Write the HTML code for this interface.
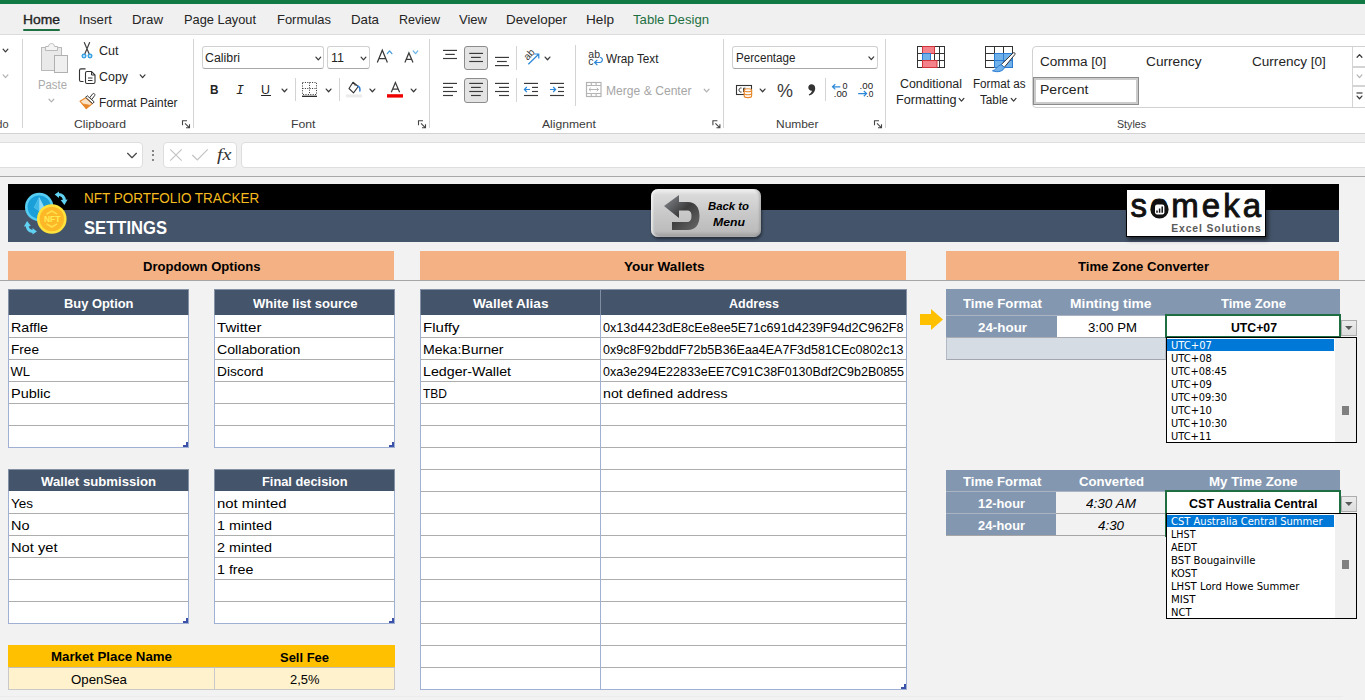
<!DOCTYPE html>
<html lang="en"><head><meta charset="utf-8"><title>NFT Portfolio Tracker - Settings</title>
<style>
html,body{margin:0;padding:0;}
body{width:1365px;height:700px;overflow:hidden;background:#f0f0f0;font-family:'Liberation Sans',sans-serif;}
#app{position:relative;width:1365px;height:700px;overflow:hidden;background:#f0f0f0;}
svg{position:absolute;overflow:visible;}
.lg{-webkit-text-stroke:0.9px #111;}
</style></head>
<body>
<div id="app">
<div style="position:absolute;left:0px;top:0px;width:1365px;height:4px;background:#127a45;"></div>
<div style="position:absolute;left:0px;top:4px;width:1365px;height:30px;background:#f0f0f0;"></div>
<span id="t0" style="position:absolute;white-space:pre;left:22.5px;top:11.5px;font-family:'Liberation Sans',sans-serif;font-size:13px;line-height:16px;color:#242424;-webkit-text-stroke:0.35px #242424;transform:scaleX(1.0667);transform-origin:0 50%;">Home</span>
<span id="t1" style="position:absolute;white-space:pre;left:78.5px;top:11.5px;font-family:'Liberation Sans',sans-serif;font-size:13px;line-height:16px;color:#242424;transform:scaleX(1.0149);transform-origin:0 50%;">Insert</span>
<span id="t2" style="position:absolute;white-space:pre;left:131.5px;top:11.5px;font-family:'Liberation Sans',sans-serif;font-size:13px;line-height:16px;color:#242424;transform:scaleX(1.0216);transform-origin:0 50%;">Draw</span>
<span id="t3" style="position:absolute;white-space:pre;left:183.5px;top:11.5px;font-family:'Liberation Sans',sans-serif;font-size:13px;line-height:16px;color:#242424;transform:scaleX(0.9861);transform-origin:0 50%;">Page Layout</span>
<span id="t4" style="position:absolute;white-space:pre;left:276.5px;top:11.5px;font-family:'Liberation Sans',sans-serif;font-size:13px;line-height:16px;color:#242424;transform:scaleX(0.9965);transform-origin:0 50%;">Formulas</span>
<span id="t5" style="position:absolute;white-space:pre;left:350.5px;top:11.5px;font-family:'Liberation Sans',sans-serif;font-size:13px;line-height:16px;color:#242424;transform:scaleX(1.0193);transform-origin:0 50%;">Data</span>
<span id="t6" style="position:absolute;white-space:pre;left:398.5px;top:11.5px;font-family:'Liberation Sans',sans-serif;font-size:13px;line-height:16px;color:#242424;transform:scaleX(0.9619);transform-origin:0 50%;">Review</span>
<span id="t7" style="position:absolute;white-space:pre;left:458.5px;top:11.5px;font-family:'Liberation Sans',sans-serif;font-size:13px;line-height:16px;color:#242424;transform:scaleX(1.0017);transform-origin:0 50%;">View</span>
<span id="t8" style="position:absolute;white-space:pre;left:505.5px;top:11.5px;font-family:'Liberation Sans',sans-serif;font-size:13px;line-height:16px;color:#242424;transform:scaleX(1.0293);transform-origin:0 50%;">Developer</span>
<span id="t9" style="position:absolute;white-space:pre;left:585.5px;top:11.5px;font-family:'Liberation Sans',sans-serif;font-size:13px;line-height:16px;color:#242424;transform:scaleX(1.0467);transform-origin:0 50%;">Help</span>
<span id="t10" style="position:absolute;white-space:pre;left:632.5px;top:11.5px;font-family:'Liberation Sans',sans-serif;font-size:13px;line-height:16px;color:#1e6f42;transform:scaleX(1.0112);transform-origin:0 50%;">Table Design</span>
<div style="position:absolute;left:22.5px;top:28.7px;width:37.5px;height:2.2px;background:#1e6f42;border-radius:1px;"></div>
<div style="position:absolute;left:0px;top:34px;width:1365px;height:100px;background:#fff;border-top:1px solid #dcdcdc;border-bottom:1px solid #d2d2d2;box-sizing:border-box;"></div>
<div style="position:absolute;left:22px;top:39px;width:1px;height:89px;background:#d4d4d4;"></div>
<div style="position:absolute;left:193px;top:39px;width:1px;height:89px;background:#d4d4d4;"></div>
<div style="position:absolute;left:429px;top:39px;width:1px;height:89px;background:#d4d4d4;"></div>
<div style="position:absolute;left:723px;top:39px;width:1px;height:89px;background:#d4d4d4;"></div>
<div style="position:absolute;left:885px;top:39px;width:1px;height:89px;background:#d4d4d4;"></div>
<span style="position:absolute;right:1356.5px;top:117.8px;font-size:11px;line-height:13px;color:#3b3b3b;white-space:pre;">Undo</span>
<span id="t11" style="position:absolute;white-space:pre;left:73.5px;top:118.0px;font-family:'Liberation Sans',sans-serif;font-size:11px;line-height:13px;color:#3b3b3b;transform:scaleX(1.1042);transform-origin:0 50%;">Clipboard</span>
<span id="t12" style="position:absolute;white-space:pre;left:291.0px;top:118.0px;font-family:'Liberation Sans',sans-serif;font-size:11px;line-height:13px;color:#3b3b3b;transform:scaleX(1.1128);transform-origin:0 50%;">Font</span>
<span id="t13" style="position:absolute;white-space:pre;left:541.5px;top:118.0px;font-family:'Liberation Sans',sans-serif;font-size:11px;line-height:13px;color:#3b3b3b;transform:scaleX(1.1038);transform-origin:0 50%;">Alignment</span>
<span id="t14" style="position:absolute;white-space:pre;left:775.5px;top:118.0px;font-family:'Liberation Sans',sans-serif;font-size:11px;line-height:13px;color:#3b3b3b;transform:scaleX(1.0863);transform-origin:0 50%;">Number</span>
<span id="t15" style="position:absolute;white-space:pre;left:1117.0px;top:118.0px;font-family:'Liberation Sans',sans-serif;font-size:11px;line-height:13px;color:#3b3b3b;transform:scaleX(0.9677);transform-origin:0 50%;">Styles</span>
<span id="t16" style="position:absolute;white-space:pre;left:37.5px;top:78.4px;font-family:'Liberation Sans',sans-serif;font-size:12px;line-height:14px;color:#ababab;transform:scaleX(0.9450);transform-origin:0 50%;">Paste</span>
<span id="t17" style="position:absolute;white-space:pre;left:99.0px;top:43.8px;font-family:'Liberation Sans',sans-serif;font-size:12px;line-height:14px;color:#242424;transform:scaleX(1.0435);transform-origin:0 50%;">Cut</span>
<span id="t18" style="position:absolute;white-space:pre;left:99.0px;top:69.8px;font-family:'Liberation Sans',sans-serif;font-size:12px;line-height:14px;color:#242424;transform:scaleX(1.0351);transform-origin:0 50%;">Copy</span>
<span id="t19" style="position:absolute;white-space:pre;left:99.0px;top:95.8px;font-family:'Liberation Sans',sans-serif;font-size:12px;line-height:14px;color:#242424;transform:scaleX(0.9892);transform-origin:0 50%;">Format Painter</span>
<div style="position:absolute;left:202px;top:46px;width:122px;height:23px;background:#fff;border:1px solid #d1d1d1;border-bottom-color:#a8a8a8;border-radius:3px;box-sizing:border-box;"></div>
<div style="position:absolute;left:327px;top:46px;width:43px;height:23px;background:#fff;border:1px solid #d1d1d1;border-bottom-color:#a8a8a8;border-radius:3px;box-sizing:border-box;"></div>
<span id="t20" style="position:absolute;white-space:pre;left:205.0px;top:51.3px;font-family:'Liberation Sans',sans-serif;font-size:12px;line-height:14px;color:#242424;transform:scaleX(1.0289);transform-origin:0 50%;">Calibri</span>
<span id="t21" style="position:absolute;white-space:pre;left:330.5px;top:51.3px;font-family:'Liberation Sans',sans-serif;font-size:12px;line-height:14px;color:#242424;transform:scaleX(1.0426);transform-origin:0 50%;">11</span>
<span id="t22" style="position:absolute;white-space:pre;left:210.0px;top:81.9px;font-family:'Liberation Sans',sans-serif;font-size:13.5px;line-height:16px;color:#242424;font-weight:bold;transform:scaleX(0.8718);transform-origin:0 50%;">B</span>
<span id="t23" style="position:absolute;white-space:pre;left:236.0px;top:82.8px;font-family:'Liberation Mono',monospace;font-size:13.5px;line-height:16px;color:#242424;font-style:italic;transform:scaleX(0.9865);transform-origin:0 50%;">I</span>
<span id="t24" style="position:absolute;white-space:pre;left:261.0px;top:81.5px;font-family:'Liberation Sans',sans-serif;font-size:13px;line-height:16px;color:#242424;transform:scaleX(0.9584);transform-origin:0 50%;">U</span>
<div style="position:absolute;left:261px;top:95px;width:9.5px;height:1.1px;background:#242424;"></div>
<div style="position:absolute;left:295px;top:78px;width:1px;height:23px;background:#d4d4d4;"></div>
<div style="position:absolute;left:339px;top:78px;width:1px;height:23px;background:#d4d4d4;"></div>
<div style="position:absolute;left:463.5px;top:45.5px;width:24.5px;height:24.5px;background:#e4e4e4;border:1px solid #8c8c8c;border-radius:3px;box-sizing:border-box;"></div>
<div style="position:absolute;left:463.5px;top:78px;width:24.5px;height:24.5px;background:#e4e4e4;border:1px solid #8c8c8c;border-radius:3px;box-sizing:border-box;"></div>
<div style="position:absolute;left:516px;top:46px;width:1px;height:24px;background:#d4d4d4;"></div>
<div style="position:absolute;left:516px;top:78px;width:1px;height:24px;background:#d4d4d4;"></div>
<div style="position:absolute;left:575px;top:45px;width:1px;height:61px;background:#d4d4d4;"></div>
<span id="t25" style="position:absolute;white-space:pre;left:606.0px;top:52.2px;font-family:'Liberation Sans',sans-serif;font-size:12px;line-height:14px;color:#242424;transform:scaleX(0.9799);transform-origin:0 50%;">Wrap Text</span>
<span id="t26" style="position:absolute;white-space:pre;left:606.0px;top:83.8px;font-family:'Liberation Sans',sans-serif;font-size:12px;line-height:14px;color:#a6a6a6;transform:scaleX(1.0094);transform-origin:0 50%;">Merge &amp; Center</span>
<div style="position:absolute;left:732px;top:46px;width:146px;height:23px;background:#fff;border:1px solid #d1d1d1;border-bottom-color:#a8a8a8;border-radius:3px;box-sizing:border-box;"></div>
<span id="t27" style="position:absolute;white-space:pre;left:735.5px;top:51.3px;font-family:'Liberation Sans',sans-serif;font-size:12px;line-height:14px;color:#242424;transform:scaleX(0.9692);transform-origin:0 50%;">Percentage</span>
<span id="t28" style="position:absolute;white-space:pre;left:777.0px;top:78.9px;font-family:'Liberation Sans',sans-serif;font-size:19px;line-height:23px;color:#3a3a3a;transform:scaleX(0.9464);transform-origin:0 50%;">%</span>
<div style="position:absolute;left:825px;top:78px;width:1px;height:23px;background:#d4d4d4;"></div>
<span id="t29" style="position:absolute;white-space:pre;left:900.0px;top:77.3px;font-family:'Liberation Sans',sans-serif;font-size:12px;line-height:14px;color:#242424;transform:scaleX(1.0325);transform-origin:0 50%;">Conditional</span>
<span id="t30" style="position:absolute;white-space:pre;left:895.5px;top:93.3px;font-family:'Liberation Sans',sans-serif;font-size:12px;line-height:14px;color:#242424;transform:scaleX(1.0548);transform-origin:0 50%;">Formatting</span>
<span id="t31" style="position:absolute;white-space:pre;left:973.0px;top:77.3px;font-family:'Liberation Sans',sans-serif;font-size:12px;line-height:14px;color:#242424;transform:scaleX(0.9719);transform-origin:0 50%;">Format as</span>
<span id="t32" style="position:absolute;white-space:pre;left:980.0px;top:93.3px;font-family:'Liberation Sans',sans-serif;font-size:12px;line-height:14px;color:#242424;transform:scaleX(0.9760);transform-origin:0 50%;">Table</span>
<div style="position:absolute;left:1031.5px;top:46px;width:340px;height:62px;background:#fff;border:1px solid #d1d1d1;border-radius:4px;box-sizing:border-box;"></div>
<div style="position:absolute;left:1352px;top:47px;width:1px;height:60px;background:#d4d4d4;"></div>
<div style="position:absolute;left:1353px;top:66px;width:12px;height:1.5px;background:#d4d4d4;"></div>
<div style="position:absolute;left:1353px;top:85.2px;width:12px;height:1.5px;background:#d4d4d4;"></div>
<span id="t33" style="position:absolute;white-space:pre;left:1039.9px;top:55.2px;font-family:'Liberation Sans',sans-serif;font-size:12.5px;line-height:15px;color:#242424;transform:scaleX(1.0860);transform-origin:0 50%;">Comma [0]</span>
<span id="t34" style="position:absolute;white-space:pre;left:1145.5px;top:55.2px;font-family:'Liberation Sans',sans-serif;font-size:12.5px;line-height:15px;color:#242424;transform:scaleX(1.0943);transform-origin:0 50%;">Currency</span>
<span id="t35" style="position:absolute;white-space:pre;left:1252.1px;top:55.2px;font-family:'Liberation Sans',sans-serif;font-size:12.5px;line-height:15px;color:#242424;transform:scaleX(1.0853);transform-origin:0 50%;">Currency [0]</span>
<div style="position:absolute;left:1033.4px;top:77.2px;width:105.3px;height:27.4px;background:#fff;border:1px solid #8c8c8c;box-sizing:border-box;box-shadow:inset 0 0 0 2px #cbcbcb;"></div>
<span id="t36" style="position:absolute;white-space:pre;left:1039.9px;top:83.0px;font-family:'Liberation Sans',sans-serif;font-size:12.5px;line-height:15px;color:#242424;transform:scaleX(1.1231);transform-origin:0 50%;">Percent</span>
<div style="position:absolute;left:0px;top:134px;width:1365px;height:42px;background:#f0f0f0;"></div>
<div style="position:absolute;left:-5px;top:142px;width:148px;height:26px;background:#fff;border:1px solid #dedede;border-radius:4px;box-sizing:border-box;"></div>
<div style="position:absolute;left:163px;top:142px;width:74px;height:26px;background:#fff;border:1px solid #dedede;border-radius:4px;box-sizing:border-box;"></div>
<div style="position:absolute;left:241px;top:142px;width:1130px;height:26px;background:#fff;border:1px solid #dedede;border-radius:4px;box-sizing:border-box;"></div>
<span id="t37" style="position:absolute;white-space:pre;left:217.0px;top:144.8px;font-family:'Liberation Serif',serif;font-size:16px;line-height:19px;color:#333;font-style:italic;transform:scaleX(1.2500);transform-origin:0 50%;">fx</span>
<div style="position:absolute;left:151.8px;top:149.8px;width:2px;height:2px;background:#858585;"></div>
<div style="position:absolute;left:151.8px;top:154.2px;width:2px;height:2px;background:#858585;"></div>
<div style="position:absolute;left:151.8px;top:158.6px;width:2px;height:2px;background:#858585;"></div>
<svg style="left:0px;top:36px" width="1365" height="134" viewBox="0 36 1365 134"><path d="M3.1 49.15L5.5 51.85L7.9 49.15" fill="none" stroke="#3a3a3a" stroke-width="1.25" stroke-linecap="round" stroke-linejoin="round"/><path d="M140.2 74.85000000000001L142.6 77.55L145.0 74.85000000000001" fill="none" stroke="#3a3a3a" stroke-width="1.25" stroke-linecap="round" stroke-linejoin="round"/><path d="M315.90000000000003 57.15L318.3 59.85L320.7 57.15" fill="none" stroke="#3a3a3a" stroke-width="1.25" stroke-linecap="round" stroke-linejoin="round"/><path d="M361.1 57.15L363.5 59.85L365.9 57.15" fill="none" stroke="#3a3a3a" stroke-width="1.25" stroke-linecap="round" stroke-linejoin="round"/><path d="M282.1 89.05000000000001L284.5 91.75L286.9 89.05000000000001" fill="none" stroke="#3a3a3a" stroke-width="1.25" stroke-linecap="round" stroke-linejoin="round"/><path d="M326.20000000000005 89.05000000000001L328.6 91.75L331.0 89.05000000000001" fill="none" stroke="#3a3a3a" stroke-width="1.25" stroke-linecap="round" stroke-linejoin="round"/><path d="M370.0 89.05000000000001L372.4 91.75L374.79999999999995 89.05000000000001" fill="none" stroke="#3a3a3a" stroke-width="1.25" stroke-linecap="round" stroke-linejoin="round"/><path d="M411.20000000000005 89.05000000000001L413.6 91.75L416.0 89.05000000000001" fill="none" stroke="#3a3a3a" stroke-width="1.25" stroke-linecap="round" stroke-linejoin="round"/><path d="M545.1 57.05L547.5 59.75L549.9 57.05" fill="none" stroke="#3a3a3a" stroke-width="1.25" stroke-linecap="round" stroke-linejoin="round"/><path d="M868.9 56.949999999999996L871.3 59.65L873.6999999999999 56.949999999999996" fill="none" stroke="#3a3a3a" stroke-width="1.25" stroke-linecap="round" stroke-linejoin="round"/><path d="M760.2 89.05000000000001L762.6 91.75L765.0 89.05000000000001" fill="none" stroke="#3a3a3a" stroke-width="1.25" stroke-linecap="round" stroke-linejoin="round"/><path d="M959.1 98.35000000000001L961.5 101.05L963.9 98.35000000000001" fill="none" stroke="#3a3a3a" stroke-width="1.25" stroke-linecap="round" stroke-linejoin="round"/><path d="M1011.2 98.35000000000001L1013.6 101.05L1016.0 98.35000000000001" fill="none" stroke="#3a3a3a" stroke-width="1.25" stroke-linecap="round" stroke-linejoin="round"/><path d="M3.1 74.85000000000001L5.5 77.55L7.9 74.85000000000001" fill="none" stroke="#b4b4b4" stroke-width="1.25" stroke-linecap="round" stroke-linejoin="round"/><path d="M49.0 99.25L51.4 101.94999999999999L53.8 99.25" fill="none" stroke="#b4b4b4" stroke-width="1.25" stroke-linecap="round" stroke-linejoin="round"/><path d="M704.2 89.25L706.6 91.94999999999999L709.0 89.25" fill="none" stroke="#b4b4b4" stroke-width="1.25" stroke-linecap="round" stroke-linejoin="round"/><path d="M1357.1 74.85000000000001L1359.5 77.55L1361.9 74.85000000000001" fill="none" stroke="#b4b4b4" stroke-width="1.25" stroke-linecap="round" stroke-linejoin="round"/><path d="M1357.1 57.25L1359.5 54.55L1361.9 57.25" fill="none" stroke="#3a3a3a" stroke-width="1.25" stroke-linecap="round" stroke-linejoin="round"/><path d="M1357.1 96.05000000000001L1359.5 98.75L1361.9 96.05000000000001" fill="none" stroke="#3a3a3a" stroke-width="1.25" stroke-linecap="round" stroke-linejoin="round"/><path d="M1356.5 93H1362.5" stroke="#3a3a3a" stroke-width="1.2"/><path d="M127.6 153.3L132 157.7L136.4 153.3" fill="none" stroke="#4a4a4a" stroke-width="1.25" stroke-linecap="round" stroke-linejoin="round"/><path d="M182.5 125.3V120.8H187M185 123.3L189.5 127.8M189.5 124.3V127.8H186" fill="none" stroke="#444" stroke-width="1.1"/><path d="M418.5 125.3V120.8H423M421 123.3L425.5 127.8M425.5 124.3V127.8H422" fill="none" stroke="#444" stroke-width="1.1"/><path d="M712.9 125.3V120.8H717.4M715.4 123.3L719.9 127.8M719.9 124.3V127.8H716.4" fill="none" stroke="#444" stroke-width="1.1"/><path d="M874.5 125.3V120.8H879M877 123.3L881.5 127.8M881.5 124.3V127.8H878" fill="none" stroke="#444" stroke-width="1.1"/><path d="M45.5 47.5H41.5V70.5H54" fill="#ececec" stroke="#b9b9b9"/><path d="M41.5 47.5H61.5V55" fill="#ececec" stroke="#b9b9b9"/><rect x="42" y="48" width="19" height="22" fill="#e9e9e9" stroke="none"/><path d="M45.5 50.5V46.5H48.5C48.5 42.5 54.5 42.5 54.5 46.5H57.5V50.5Z" fill="#f4f4f4" stroke="#b9b9b9"/><path d="M41.5 47.5V70.5H54M61.5 47.5V55M41.5 47.5H45.5M57.5 47.5H61.5" fill="none" stroke="#b9b9b9"/><rect x="54.5" y="55.5" width="13" height="17" fill="#efefef" stroke="#b0b0b0"/><path d="M84.3 42.5L89.3 54.2M89.6 42.5L84.7 54.2" stroke="#444" stroke-width="1.2" fill="none" stroke-linecap="round"/><circle cx="84" cy="56" r="1.9" fill="#a9dcf9" stroke="#2e9be0" stroke-width="1.2"/><circle cx="90" cy="56" r="1.9" fill="#a9dcf9" stroke="#2e9be0" stroke-width="1.2"/><path d="M85.5 68.9H81C80 68.9 79.5 69.4 79.5 70.4V80C79.5 81 80 81.5 81 81.5H83.5" fill="none" stroke="#333" stroke-width="1.1"/><path d="M87 71.5H91.5L95 75V82C95 83 94.5 83.5 93.5 83.5H87C86 83.5 85.5 83 85.5 82V73C85.5 72 86 71.5 87 71.5Z" fill="#fff" stroke="#333" stroke-width="1.1"/><path d="M91.5 71.5V75H95" fill="none" stroke="#333" stroke-width="1"/><path d="M88 78H92.5M88 80.5H92.5" stroke="#333" stroke-width="1"/><path d="M80 101.2L85.8 97.8L92.3 103.6L86.3 108.6Z" fill="#fbe3c8" stroke="#e8872a" stroke-width="1.1" stroke-linejoin="round"/><path d="M82.3 103.9L89.6 105.2L86.3 108.6Z" fill="#e8872a" stroke="#e8872a" stroke-width=".8" stroke-linejoin="round"/><path d="M85.6 97.3L87.2 95.7L94.2 101.9L92.6 103.6Z" fill="#fff" stroke="#3a3a3a" stroke-width="1" stroke-linejoin="round"/><path d="M89.7 97.7L92.6 93.9C93.6 92.7 95.6 94.2 94.7 95.5L91.8 99.5Z" fill="#fff" stroke="#3a3a3a" stroke-width="1" stroke-linejoin="round"/><path d="M377.3 62.6L382.3 50.2L387.4 62.6M379 58.6H385.7" fill="none" stroke="#3a3a3a" stroke-width="1.25"/><path d="M387.3 53.699999999999996L389.6 50.9L391.90000000000003 53.699999999999996" fill="none" stroke="#3f9ad8" stroke-width="1.2" stroke-linecap="round" stroke-linejoin="round"/><path d="M404.9 62.6L408.9 52.9L413 62.6M406.3 59.4H411.6" fill="none" stroke="#3a3a3a" stroke-width="1.2"/><path d="M413.2 50.9L415.5 53.699999999999996L417.8 50.9" fill="none" stroke="#6bb4e6" stroke-width="1.2" stroke-linecap="round" stroke-linejoin="round"/><path d="M302.5 82.5H316.5V94.5H302.5ZM309.5 82.5V94.5M302.5 88.5H316.5" fill="none" stroke="#333" stroke-width="1" stroke-dasharray="1 1.4"/><path d="M302 96.3H317" stroke="#222" stroke-width="1.3"/><path d="M353 82.3L349 88.5L353.5 92.8L358.3 86.5Z" fill="#fff" stroke="#333" stroke-width="1.1" stroke-linejoin="round"/><path d="M353 82.3C353.5 84 354.5 85 355.5 85.5" fill="none" stroke="#333" stroke-width="1"/><path d="M357.5 86C359.5 86.5 360.3 88.5 359.8 91.5" fill="none" stroke="#2b7cd3" stroke-width="1.5"/><rect x="346" y="94.4" width="16" height="3" fill="#ebebeb"/><path d="M391.3 92.3L395.4 82.6L399.6 92.3M392.7 89.2H398.2" fill="none" stroke="#3a3a3a" stroke-width="1.2"/><rect x="387" y="94.2" width="16" height="3.4" fill="#ee0000"/><path d="M443 50.4H457" stroke="#3a3a3a" stroke-width="1.15"/><path d="M445.3 54.4H454.8" stroke="#3a3a3a" stroke-width="1.15"/><path d="M443 58.5H457" stroke="#3a3a3a" stroke-width="1.15"/><path d="M469.2 53.4H483" stroke="#3a3a3a" stroke-width="1.15"/><path d="M471 57.4H480.8" stroke="#3a3a3a" stroke-width="1.15"/><path d="M469.2 61.5H483" stroke="#3a3a3a" stroke-width="1.15"/><path d="M469.2 83.4H483" stroke="#3a3a3a" stroke-width="1.15"/><path d="M471 87.4H480.8" stroke="#3a3a3a" stroke-width="1.15"/><path d="M469.2 91.5H483" stroke="#3a3a3a" stroke-width="1.15"/><path d="M471 95.5H480.8" stroke="#3a3a3a" stroke-width="1.15"/><path d="M495 57.4H509" stroke="#3a3a3a" stroke-width="1.15"/><path d="M497 61.5H506.8" stroke="#3a3a3a" stroke-width="1.15"/><path d="M495 65.6H509" stroke="#3a3a3a" stroke-width="1.15"/><path d="M443 83.4H457" stroke="#3a3a3a" stroke-width="1.15"/><path d="M443 87.4H453" stroke="#3a3a3a" stroke-width="1.15"/><path d="M443 91.5H457" stroke="#3a3a3a" stroke-width="1.15"/><path d="M443 95.5H453" stroke="#3a3a3a" stroke-width="1.15"/><path d="M495 83.4H509" stroke="#3a3a3a" stroke-width="1.15"/><path d="M499 87.4H509" stroke="#3a3a3a" stroke-width="1.15"/><path d="M495 91.5H509" stroke="#3a3a3a" stroke-width="1.15"/><path d="M499 95.5H509" stroke="#3a3a3a" stroke-width="1.15"/><path d="M524 83.4H538" stroke="#3a3a3a" stroke-width="1.15"/><path d="M532 87.4H538" stroke="#3a3a3a" stroke-width="1.15"/><path d="M532 91.5H538" stroke="#3a3a3a" stroke-width="1.15"/><path d="M524 95.5H538" stroke="#3a3a3a" stroke-width="1.15"/><path d="M550 83.4H564" stroke="#3a3a3a" stroke-width="1.15"/><path d="M558 87.4H564" stroke="#3a3a3a" stroke-width="1.15"/><path d="M558 91.5H564" stroke="#3a3a3a" stroke-width="1.15"/><path d="M550 95.5H564" stroke="#3a3a3a" stroke-width="1.15"/><path d="M524.4 89.5H530M526.8 87L524.4 89.5L526.8 92" fill="none" stroke="#2b88d8" stroke-width="1.2"/><path d="M550 89.5H555.6M553.2 87L555.6 89.5L553.2 92" fill="none" stroke="#2b88d8" stroke-width="1.2"/><path d="M528.3 64.3L538.6 54.2M534.3 54H538.8V58.5" fill="none" stroke="#2b88d8" stroke-width="1.2"/><text x="0" y="0" transform="translate(527.8 60.8) rotate(-47)" font-family="Liberation Sans,sans-serif" font-size="10" fill="#3a3a3a">ab</text><text x="588.3" y="57.5" font-family="Liberation Sans,sans-serif" font-size="10.5" fill="#333">ab</text><text x="588.3" y="64.8" font-family="Liberation Sans,sans-serif" font-size="10.5" fill="#333">c</text><path d="M600 57.5C603.5 57.5 603 62.5 599.5 62.5H594.8M597.3 60L594.6 62.5L597.3 65" fill="none" stroke="#2b88d8" stroke-width="1.2"/><rect x="586.5" y="82.5" width="14.5" height="14" fill="none" stroke="#b4b4b4" stroke-width="1.2"/><path d="M586.5 85.5H601M586.5 93.5H601M591.3 82.5V85.5M596.1 82.5V85.5M591.3 93.5V96.5M596.1 93.5V96.5" stroke="#b4b4b4" stroke-width="1.1" fill="none"/><path d="M589 89.5H598.5M590.8 87.8L589 89.5L590.8 91.2M596.7 87.8L598.5 89.5L596.7 91.2" stroke="#b4b4b4" stroke-width="1" fill="none"/><rect x="736.5" y="85.5" width="15" height="9" fill="#fff" stroke="#333" stroke-width="1.1"/><path d="M741.5 88C740 87.7 739 88.6 739 90C739 91.4 740 92.3 741.5 92M743.5 92V88.2H745.5" fill="none" stroke="#333" stroke-width="1"/><path d="M744.2 90.3V96C744.2 98.2 751.6 98.2 751.6 96V90.3" fill="#fff" stroke="#e8872a" stroke-width="1.1"/><ellipse cx="747.9" cy="90.3" rx="3.7" ry="1.5" fill="#fff" stroke="#e8872a" stroke-width="1.1"/><path d="M744.2 93.2C744.2 95.2 751.6 95.2 751.6 93.2" fill="none" stroke="#e8872a" stroke-width="1.1"/><path d="M811.3 84.2C813.6 84.2 815.2 85.8 815.2 88.2C815.2 91.5 812.8 94.4 809.3 95.6L808.7 94.5C810.6 93.6 811.8 92.3 812 90.8C810 91 808.3 89.7 808.3 87.6C808.3 85.7 809.6 84.2 811.3 84.2Z" fill="#333"/><path d="M832.5 86.8H840.3M835.3 84.2L832.5 86.8L835.3 89.4" fill="none" stroke="#2b88d8" stroke-width="1.2"/><text x="842.6" y="88.7" font-family="Liberation Sans,sans-serif" font-size="9" fill="#222">0</text><text x="833.7" y="96.8" font-family="Liberation Sans,sans-serif" font-size="9" fill="#222" textLength="13.5" lengthAdjust="spacingAndGlyphs">.00</text><path d="M858.2 93.6H866.6M863.8 91L866.6 93.6L863.8 96.2" fill="none" stroke="#2b88d8" stroke-width="1.2"/><text x="859.6" y="88.7" font-family="Liberation Sans,sans-serif" font-size="9" fill="#222" textLength="13.5" lengthAdjust="spacingAndGlyphs">.00</text><text x="866.3" y="96.8" font-family="Liberation Sans,sans-serif" font-size="9" fill="#222" textLength="7" lengthAdjust="spacingAndGlyphs">.0</text><rect x="917.5" y="46.5" width="27" height="21" fill="#fff" stroke="#333" stroke-width="1"/><path d="M917.5 53.5H944.5M917.5 60.5H944.5M922.5 46.5V67.5M939.5 46.5V67.5M934.5 46.5V67.5" stroke="#333" stroke-width="1" fill="none"/><rect x="922.5" y="46.5" width="12" height="7" fill="#f4828b" stroke="#d13438"/><rect x="922.5" y="53.5" width="8" height="7" fill="#6fb1e8" stroke="#2b7cd3"/><rect x="922.5" y="60.5" width="14.5" height="7" fill="#f4828b" stroke="#d13438"/><rect x="985.5" y="46.5" width="27" height="21" fill="#fff" stroke="#333" stroke-width="1"/><rect x="994.5" y="53.5" width="18" height="14" fill="#6fb1e8"/><path d="M985.5 53.5H1012.5M985.5 60.5H1012.5M994.5 46.5V67.5M1003.5 46.5V67.5" stroke="#333" stroke-width="1" fill="none"/><path d="M994.5 53.5H1012.5V67.5H994.5Z" fill="none" stroke="#2b7cd3" stroke-width="1"/><path d="M994.5 60.5H1012.5M1003.5 53.5V67.5" stroke="#2b7cd3" stroke-width="1"/><path d="M1013.3 52.8C1014.6 52.2 1015.6 53.4 1014.8 54.6L1004.3 67.3L1001.2 64.6Z" fill="#fff" stroke="#333" stroke-width="1" stroke-linejoin="round"/><path d="M1001 64.5L1004.4 67.4C1003.6 70.8 998.5 73 992.5 70.8C996 70 996.5 66.6 1001 64.5Z" fill="#6fb1e8" stroke="#2b7cd3" stroke-width="1" stroke-linejoin="round"/><path d="M170.2 149.4L181.7 160.6M181.7 149.4L170.2 160.6" stroke="#c3c3c3" stroke-width="1.2" fill="none"/><path d="M192.3 155L197.3 160L207.7 149.3" stroke="#c3c3c3" stroke-width="1.2" fill="none"/></svg>
<div style="position:absolute;left:0px;top:176px;width:1365px;height:524px;background:#f2f2f2;"></div>
<div style="position:absolute;left:0px;top:176px;width:1365px;height:1px;background:#a8a8a8;"></div>
<div style="position:absolute;left:8px;top:184px;width:1331px;height:26px;background:#000;"></div>
<div style="position:absolute;left:8px;top:210px;width:1331px;height:32px;background:#44546a;"></div>
<span id="t38" style="position:absolute;white-space:pre;left:84.0px;top:188.8px;font-family:'Liberation Sans',sans-serif;font-size:15px;line-height:18px;color:#f6bb1e;transform:scaleX(0.8988);transform-origin:0 50%;">NFT PORTFOLIO TRACKER</span>
<span id="t39" style="position:absolute;white-space:pre;left:84.0px;top:216.8px;font-family:'Liberation Sans',sans-serif;font-size:18px;line-height:22px;color:#fff;font-weight:bold;transform:scaleX(0.9221);transform-origin:0 50%;">SETTINGS</span>
<div style="position:absolute;left:8px;top:251px;width:386px;height:29px;background:#f4b183;"></div>
<div style="position:absolute;left:420px;top:251px;width:486px;height:29px;background:#f4b183;"></div>
<div style="position:absolute;left:946px;top:251px;width:393px;height:29px;background:#f4b183;"></div>
<div style="position:absolute;left:0px;top:280px;width:1365px;height:1px;background:#a6a6a6;"></div>
<span id="t40" style="position:absolute;white-space:pre;left:143.0px;top:259.0px;font-family:'Liberation Sans',sans-serif;font-size:13px;line-height:16px;color:#000;font-weight:bold;transform:scaleX(1.0044);transform-origin:0 50%;">Dropdown Options</span>
<span id="t41" style="position:absolute;white-space:pre;left:624.0px;top:259.0px;font-family:'Liberation Sans',sans-serif;font-size:13px;line-height:16px;color:#000;font-weight:bold;transform:scaleX(1.0414);transform-origin:0 50%;">Your Wallets</span>
<span id="t42" style="position:absolute;white-space:pre;left:1077.5px;top:259.0px;font-family:'Liberation Sans',sans-serif;font-size:13px;line-height:16px;color:#000;font-weight:bold;transform:scaleX(1.0093);transform-origin:0 50%;">Time Zone Converter</span>
<div style="position:absolute;left:8px;top:289px;width:181px;height:26px;background:#8592a6;"></div>
<div style="position:absolute;left:9px;top:290px;width:179px;height:25px;background:#44546a;"></div>
<div style="position:absolute;left:8px;top:315px;width:181px;height:133px;background:#fff;border-left:1px solid #9fb0d3;border-right:1px solid #9fb0d3;border-bottom:1px solid #9fb0d3;box-sizing:border-box;"></div>
<div style="position:absolute;left:9px;top:337px;width:179px;height:1px;background:#adadad;"></div>
<div style="position:absolute;left:9px;top:359px;width:179px;height:1px;background:#adadad;"></div>
<div style="position:absolute;left:9px;top:381px;width:179px;height:1px;background:#adadad;"></div>
<div style="position:absolute;left:9px;top:403px;width:179px;height:1px;background:#adadad;"></div>
<div style="position:absolute;left:9px;top:425px;width:179px;height:1px;background:#adadad;"></div>
<svg style="left:183px;top:442px" width="5" height="5"><path d="M5 0V5H0V3H3V0Z" fill="#3b52a8"/></svg>
<div style="position:absolute;left:214px;top:289px;width:181px;height:26px;background:#8592a6;"></div>
<div style="position:absolute;left:215px;top:290px;width:179px;height:25px;background:#44546a;"></div>
<div style="position:absolute;left:214px;top:315px;width:181px;height:133px;background:#fff;border-left:1px solid #9fb0d3;border-right:1px solid #9fb0d3;border-bottom:1px solid #9fb0d3;box-sizing:border-box;"></div>
<div style="position:absolute;left:215px;top:337px;width:179px;height:1px;background:#adadad;"></div>
<div style="position:absolute;left:215px;top:359px;width:179px;height:1px;background:#adadad;"></div>
<div style="position:absolute;left:215px;top:381px;width:179px;height:1px;background:#adadad;"></div>
<div style="position:absolute;left:215px;top:403px;width:179px;height:1px;background:#adadad;"></div>
<div style="position:absolute;left:215px;top:425px;width:179px;height:1px;background:#adadad;"></div>
<svg style="left:389px;top:442px" width="5" height="5"><path d="M5 0V5H0V3H3V0Z" fill="#3b52a8"/></svg>
<div style="position:absolute;left:420px;top:289px;width:487px;height:26px;background:#8592a6;"></div>
<div style="position:absolute;left:421px;top:290px;width:485px;height:25px;background:#44546a;"></div>
<div style="position:absolute;left:420px;top:315px;width:487px;height:375px;background:#fff;border-left:1px solid #9fb0d3;border-right:1px solid #9fb0d3;border-bottom:1px solid #9fb0d3;box-sizing:border-box;"></div>
<div style="position:absolute;left:421px;top:337px;width:485px;height:1px;background:#adadad;"></div>
<div style="position:absolute;left:421px;top:359px;width:485px;height:1px;background:#adadad;"></div>
<div style="position:absolute;left:421px;top:381px;width:485px;height:1px;background:#adadad;"></div>
<div style="position:absolute;left:421px;top:403px;width:485px;height:1px;background:#adadad;"></div>
<div style="position:absolute;left:421px;top:425px;width:485px;height:1px;background:#adadad;"></div>
<div style="position:absolute;left:421px;top:447px;width:485px;height:1px;background:#adadad;"></div>
<div style="position:absolute;left:421px;top:469px;width:485px;height:1px;background:#adadad;"></div>
<div style="position:absolute;left:421px;top:491px;width:485px;height:1px;background:#adadad;"></div>
<div style="position:absolute;left:421px;top:513px;width:485px;height:1px;background:#adadad;"></div>
<div style="position:absolute;left:421px;top:535px;width:485px;height:1px;background:#adadad;"></div>
<div style="position:absolute;left:421px;top:557px;width:485px;height:1px;background:#adadad;"></div>
<div style="position:absolute;left:421px;top:579px;width:485px;height:1px;background:#adadad;"></div>
<div style="position:absolute;left:421px;top:601px;width:485px;height:1px;background:#adadad;"></div>
<div style="position:absolute;left:421px;top:623px;width:485px;height:1px;background:#adadad;"></div>
<div style="position:absolute;left:421px;top:645px;width:485px;height:1px;background:#adadad;"></div>
<div style="position:absolute;left:421px;top:667px;width:485px;height:1px;background:#adadad;"></div>
<div style="position:absolute;left:600px;top:290px;width:1px;height:25px;background:#7f8da3;"></div>
<div style="position:absolute;left:600px;top:315px;width:1px;height:374px;background:#9fb0d3;"></div>
<svg style="left:901px;top:684px" width="5" height="5"><path d="M5 0V5H0V3H3V0Z" fill="#3b52a8"/></svg>
<div style="position:absolute;left:8px;top:469px;width:181px;height:22px;background:#8592a6;"></div>
<div style="position:absolute;left:9px;top:470px;width:179px;height:21px;background:#44546a;"></div>
<div style="position:absolute;left:8px;top:491px;width:181px;height:133px;background:#fff;border-left:1px solid #9fb0d3;border-right:1px solid #9fb0d3;border-bottom:1px solid #9fb0d3;box-sizing:border-box;"></div>
<div style="position:absolute;left:9px;top:513px;width:179px;height:1px;background:#adadad;"></div>
<div style="position:absolute;left:9px;top:535px;width:179px;height:1px;background:#adadad;"></div>
<div style="position:absolute;left:9px;top:557px;width:179px;height:1px;background:#adadad;"></div>
<div style="position:absolute;left:9px;top:579px;width:179px;height:1px;background:#adadad;"></div>
<div style="position:absolute;left:9px;top:601px;width:179px;height:1px;background:#adadad;"></div>
<svg style="left:183px;top:618px" width="5" height="5"><path d="M5 0V5H0V3H3V0Z" fill="#3b52a8"/></svg>
<div style="position:absolute;left:214px;top:469px;width:181px;height:22px;background:#8592a6;"></div>
<div style="position:absolute;left:215px;top:470px;width:179px;height:21px;background:#44546a;"></div>
<div style="position:absolute;left:214px;top:491px;width:181px;height:133px;background:#fff;border-left:1px solid #9fb0d3;border-right:1px solid #9fb0d3;border-bottom:1px solid #9fb0d3;box-sizing:border-box;"></div>
<div style="position:absolute;left:215px;top:513px;width:179px;height:1px;background:#adadad;"></div>
<div style="position:absolute;left:215px;top:535px;width:179px;height:1px;background:#adadad;"></div>
<div style="position:absolute;left:215px;top:557px;width:179px;height:1px;background:#adadad;"></div>
<div style="position:absolute;left:215px;top:579px;width:179px;height:1px;background:#adadad;"></div>
<div style="position:absolute;left:215px;top:601px;width:179px;height:1px;background:#adadad;"></div>
<svg style="left:389px;top:618px" width="5" height="5"><path d="M5 0V5H0V3H3V0Z" fill="#3b52a8"/></svg>
<span id="t43" style="position:absolute;white-space:pre;left:63.5px;top:295.7px;font-family:'Liberation Sans',sans-serif;font-size:13px;line-height:16px;color:#fff;font-weight:bold;transform:scaleX(0.9922);transform-origin:0 50%;">Buy Option</span>
<span id="t44" style="position:absolute;white-space:pre;left:252.5px;top:295.7px;font-family:'Liberation Sans',sans-serif;font-size:13px;line-height:16px;color:#fff;font-weight:bold;transform:scaleX(1.0045);transform-origin:0 50%;">White list source</span>
<span id="t45" style="position:absolute;white-space:pre;left:472.5px;top:295.7px;font-family:'Liberation Sans',sans-serif;font-size:13px;line-height:16px;color:#fff;font-weight:bold;transform:scaleX(1.0484);transform-origin:0 50%;">Wallet Alias</span>
<span id="t46" style="position:absolute;white-space:pre;left:729.0px;top:295.7px;font-family:'Liberation Sans',sans-serif;font-size:13px;line-height:16px;color:#fff;font-weight:bold;transform:scaleX(0.9610);transform-origin:0 50%;">Address</span>
<span id="t47" style="position:absolute;white-space:pre;left:41.0px;top:473.7px;font-family:'Liberation Sans',sans-serif;font-size:13px;line-height:16px;color:#fff;font-weight:bold;transform:scaleX(1.0118);transform-origin:0 50%;">Wallet submission</span>
<span id="t48" style="position:absolute;white-space:pre;left:261.5px;top:473.7px;font-family:'Liberation Sans',sans-serif;font-size:13px;line-height:16px;color:#fff;font-weight:bold;transform:scaleX(0.9863);transform-origin:0 50%;">Final decision</span>
<span id="t49" style="position:absolute;white-space:pre;left:10.5px;top:319.7px;font-family:'Liberation Sans',sans-serif;font-size:13px;line-height:16px;color:#000;transform:scaleX(1.0968);transform-origin:0 50%;">Raffle</span>
<span id="t50" style="position:absolute;white-space:pre;left:10.5px;top:341.7px;font-family:'Liberation Sans',sans-serif;font-size:13px;line-height:16px;color:#000;transform:scaleX(1.0473);transform-origin:0 50%;">Free</span>
<span id="t51" style="position:absolute;white-space:pre;left:10.5px;top:363.7px;font-family:'Liberation Sans',sans-serif;font-size:13px;line-height:16px;color:#000;transform:scaleX(1.0000);transform-origin:0 50%;">WL</span>
<span id="t52" style="position:absolute;white-space:pre;left:10.5px;top:385.7px;font-family:'Liberation Sans',sans-serif;font-size:13px;line-height:16px;color:#000;transform:scaleX(1.1151);transform-origin:0 50%;">Public</span>
<span id="t53" style="position:absolute;white-space:pre;left:217.0px;top:319.7px;font-family:'Liberation Sans',sans-serif;font-size:13px;line-height:16px;color:#000;transform:scaleX(1.1620);transform-origin:0 50%;">Twitter</span>
<span id="t54" style="position:absolute;white-space:pre;left:217.0px;top:341.7px;font-family:'Liberation Sans',sans-serif;font-size:13px;line-height:16px;color:#000;transform:scaleX(1.0899);transform-origin:0 50%;">Collaboration</span>
<span id="t55" style="position:absolute;white-space:pre;left:217.0px;top:363.7px;font-family:'Liberation Sans',sans-serif;font-size:13px;line-height:16px;color:#000;transform:scaleX(1.0549);transform-origin:0 50%;">Discord</span>
<span id="t56" style="position:absolute;white-space:pre;left:10.5px;top:495.7px;font-family:'Liberation Sans',sans-serif;font-size:13px;line-height:16px;color:#000;transform:scaleX(1.0368);transform-origin:0 50%;">Yes</span>
<span id="t57" style="position:absolute;white-space:pre;left:10.5px;top:517.7px;font-family:'Liberation Sans',sans-serif;font-size:13px;line-height:16px;color:#000;transform:scaleX(1.1128);transform-origin:0 50%;">No</span>
<span id="t58" style="position:absolute;white-space:pre;left:10.5px;top:539.7px;font-family:'Liberation Sans',sans-serif;font-size:13px;line-height:16px;color:#000;transform:scaleX(1.1290);transform-origin:0 50%;">Not yet</span>
<span id="t59" style="position:absolute;white-space:pre;left:217.0px;top:495.7px;font-family:'Liberation Sans',sans-serif;font-size:13px;line-height:16px;color:#000;transform:scaleX(1.1449);transform-origin:0 50%;">not minted</span>
<span id="t60" style="position:absolute;white-space:pre;left:217.0px;top:517.7px;font-family:'Liberation Sans',sans-serif;font-size:13px;line-height:16px;color:#000;transform:scaleX(1.1028);transform-origin:0 50%;">1 minted</span>
<span id="t61" style="position:absolute;white-space:pre;left:217.0px;top:539.7px;font-family:'Liberation Sans',sans-serif;font-size:13px;line-height:16px;color:#000;transform:scaleX(1.1028);transform-origin:0 50%;">2 minted</span>
<span id="t62" style="position:absolute;white-space:pre;left:217.0px;top:561.7px;font-family:'Liberation Sans',sans-serif;font-size:13px;line-height:16px;color:#000;transform:scaleX(1.0977);transform-origin:0 50%;">1 free</span>
<span id="t63" style="position:absolute;white-space:pre;left:423.0px;top:319.7px;font-family:'Liberation Sans',sans-serif;font-size:13px;line-height:16px;color:#000;transform:scaleX(1.1564);transform-origin:0 50%;">Fluffy</span>
<span id="t64" style="position:absolute;white-space:pre;left:423.0px;top:341.7px;font-family:'Liberation Sans',sans-serif;font-size:13px;line-height:16px;color:#000;transform:scaleX(1.0817);transform-origin:0 50%;">Meka:Burner</span>
<span id="t65" style="position:absolute;white-space:pre;left:423.0px;top:363.7px;font-family:'Liberation Sans',sans-serif;font-size:13px;line-height:16px;color:#000;transform:scaleX(1.0938);transform-origin:0 50%;">Ledger-Wallet</span>
<span id="t66" style="position:absolute;white-space:pre;left:423.0px;top:385.7px;font-family:'Liberation Sans',sans-serif;font-size:13px;line-height:16px;color:#000;transform:scaleX(0.9231);transform-origin:0 50%;">TBD</span>
<span id="t67" style="position:absolute;white-space:pre;left:603.0px;top:319.7px;font-family:'Liberation Sans',sans-serif;font-size:13px;line-height:16px;color:#000;transform:scaleX(0.9713);transform-origin:0 50%;">0x13d4423dE8cEe8ee5E71c691d4239F94d2C962F8</span>
<span id="t68" style="position:absolute;white-space:pre;left:603.0px;top:341.7px;font-family:'Liberation Sans',sans-serif;font-size:13px;line-height:16px;color:#000;transform:scaleX(0.9624);transform-origin:0 50%;">0x9c8F92bddF72b5B36Eaa4EA7F3d581CEc0802c13</span>
<span id="t69" style="position:absolute;white-space:pre;left:603.0px;top:363.7px;font-family:'Liberation Sans',sans-serif;font-size:13px;line-height:16px;color:#000;transform:scaleX(0.9595);transform-origin:0 50%;">0xa3e294E22833eEE7C91C38F0130Bdf2C9b2B0855</span>
<span id="t70" style="position:absolute;white-space:pre;left:603.0px;top:385.7px;font-family:'Liberation Sans',sans-serif;font-size:13px;line-height:16px;color:#000;transform:scaleX(1.0902);transform-origin:0 50%;">not defined address</span>
<div style="position:absolute;left:0px;top:696px;width:1343px;height:1px;background:#ececec;"></div>
<div style="position:absolute;left:8px;top:645px;width:387px;height:22px;background:#ffc000;"></div>
<div style="position:absolute;left:8px;top:667px;width:387px;height:22.5px;background:#fff2cc;border:1px solid #c9c9c9;border-top:1px solid #bfbfbf;box-sizing:border-box;"></div>
<div style="position:absolute;left:214px;top:667px;width:1px;height:22px;background:#c9c9c9;"></div>
<span id="t71" style="position:absolute;white-space:pre;left:50.5px;top:648.5px;font-family:'Liberation Sans',sans-serif;font-size:13px;line-height:16px;color:#000;font-weight:bold;transform:scaleX(1.0210);transform-origin:0 50%;">Market Place Name</span>
<span id="t72" style="position:absolute;white-space:pre;left:280.0px;top:649.5px;font-family:'Liberation Sans',sans-serif;font-size:13px;line-height:16px;color:#000;font-weight:bold;transform:scaleX(0.9971);transform-origin:0 50%;">Sell Fee</span>
<span id="t73" style="position:absolute;white-space:pre;left:71.0px;top:671.7px;font-family:'Liberation Sans',sans-serif;font-size:13px;line-height:16px;color:#000;transform:scaleX(1.0193);transform-origin:0 50%;">OpenSea</span>
<span id="t74" style="position:absolute;white-space:pre;left:289.5px;top:671.7px;font-family:'Liberation Sans',sans-serif;font-size:13px;line-height:16px;color:#000;transform:scaleX(0.9953);transform-origin:0 50%;">2,5%</span>
<div style="position:absolute;left:946px;top:289px;width:394px;height:26px;background:#8497b0;"></div>
<div style="position:absolute;left:946px;top:315px;width:220px;height:1px;background:#a9b3c2;"></div>
<div style="position:absolute;left:946px;top:316px;width:111px;height:21px;background:#8497b0;"></div>
<div style="position:absolute;left:1057px;top:316px;width:109px;height:21px;background:#fff;"></div>
<div style="position:absolute;left:946px;top:337px;width:220px;height:22.6px;background:#d6dce4;border:1px solid #b4bac4;border-top:1px solid #a9adb3;border-bottom:1px solid #a3a7ad;box-sizing:border-box;"></div>
<span id="t75" style="position:absolute;white-space:pre;left:962.5px;top:295.7px;font-family:'Liberation Sans',sans-serif;font-size:13px;line-height:16px;color:#fff;font-weight:bold;transform:scaleX(1.0157);transform-origin:0 50%;">Time Format</span>
<span id="t76" style="position:absolute;white-space:pre;left:1070.0px;top:295.7px;font-family:'Liberation Sans',sans-serif;font-size:13px;line-height:16px;color:#fff;font-weight:bold;transform:scaleX(1.0647);transform-origin:0 50%;">Minting time</span>
<span id="t77" style="position:absolute;white-space:pre;left:1220.5px;top:295.7px;font-family:'Liberation Sans',sans-serif;font-size:13px;line-height:16px;color:#fff;font-weight:bold;transform:scaleX(1.0034);transform-origin:0 50%;">Time Zone</span>
<span id="t78" style="position:absolute;white-space:pre;left:977.5px;top:319.7px;font-family:'Liberation Sans',sans-serif;font-size:13px;line-height:16px;color:#fff;font-weight:bold;transform:scaleX(1.0279);transform-origin:0 50%;">24-hour</span>
<span id="t79" style="position:absolute;white-space:pre;left:1087.5px;top:319.7px;font-family:'Liberation Sans',sans-serif;font-size:13px;line-height:16px;color:#000;transform:scaleX(1.0119);transform-origin:0 50%;">3:00 PM</span>
<svg style="left:920px;top:309px" width="23" height="22"><path d="M0 5H11V0L23 10.5L11 21V16H0Z" fill="#ffc000"/></svg>
<div style="position:absolute;left:946px;top:469.5px;width:394px;height:22px;background:#8497b0;"></div>
<div style="position:absolute;left:946px;top:491.5px;width:110.4px;height:44px;background:#8497b0;"></div>
<div style="position:absolute;left:946px;top:491px;width:220px;height:1px;background:#a9b3c2;"></div>
<div style="position:absolute;left:946px;top:513px;width:110px;height:1px;background:#a9b3c2;"></div>
<div style="position:absolute;left:1056.4px;top:492px;width:109.6px;height:43.5px;background:#f2f2f2;border-bottom:1px solid #a6a6a6;box-sizing:border-box;"></div>
<div style="position:absolute;left:1056.4px;top:513px;width:109.6px;height:1px;background:#a6a6a6;"></div>
<div style="position:absolute;left:946px;top:535px;width:111px;height:1px;background:#a6a6a6;"></div>
<span id="t80" style="position:absolute;white-space:pre;left:962.5px;top:473.7px;font-family:'Liberation Sans',sans-serif;font-size:13px;line-height:16px;color:#fff;font-weight:bold;transform:scaleX(1.0092);transform-origin:0 50%;">Time Format</span>
<span id="t81" style="position:absolute;white-space:pre;left:1079.0px;top:473.7px;font-family:'Liberation Sans',sans-serif;font-size:13px;line-height:16px;color:#fff;font-weight:bold;transform:scaleX(1.0109);transform-origin:0 50%;">Converted</span>
<span id="t82" style="position:absolute;white-space:pre;left:1209.0px;top:473.7px;font-family:'Liberation Sans',sans-serif;font-size:13px;line-height:16px;color:#fff;font-weight:bold;transform:scaleX(1.0237);transform-origin:0 50%;">My Time Zone</span>
<span id="t83" style="position:absolute;white-space:pre;left:978.0px;top:495.7px;font-family:'Liberation Sans',sans-serif;font-size:13px;line-height:16px;color:#fff;font-weight:bold;transform:scaleX(0.9859);transform-origin:0 50%;">12-hour</span>
<span id="t84" style="position:absolute;white-space:pre;left:978.0px;top:517.7px;font-family:'Liberation Sans',sans-serif;font-size:13px;line-height:16px;color:#fff;font-weight:bold;transform:scaleX(0.9859);transform-origin:0 50%;">24-hour</span>
<span id="t85" style="position:absolute;white-space:pre;left:1085.5px;top:495.7px;font-family:'Liberation Sans',sans-serif;font-size:13px;line-height:16px;color:#000;font-style:italic;transform:scaleX(1.0430);transform-origin:0 50%;">4:30 AM</span>
<span id="t86" style="position:absolute;white-space:pre;left:1097.5px;top:517.7px;font-family:'Liberation Sans',sans-serif;font-size:13px;line-height:16px;color:#000;font-style:italic;transform:scaleX(1.0272);transform-origin:0 50%;">4:30</span>
<div style="position:absolute;left:1165px;top:314px;width:176px;height:24px;background:#fff;border:2px solid #1e6e42;box-sizing:border-box;"></div>
<span id="t87" style="position:absolute;white-space:pre;left:1230.5px;top:319.7px;font-family:'Liberation Sans',sans-serif;font-size:13px;line-height:16px;color:#000;font-weight:bold;transform:scaleX(0.9430);transform-origin:0 50%;">UTC+07</span>
<div style="position:absolute;left:1340.5px;top:319.5px;width:16.5px;height:16px;background:linear-gradient(#ececec,#dddddd);border:1px solid #adadad;box-sizing:border-box;"></div>
<svg style="left:1345px;top:326.0px" width="8" height="4"><path d="M0 0H7.6L3.8 4Z" fill="#5a5a5a"/></svg>
<div style="position:absolute;left:1166px;top:337.2px;width:191px;height:105.5px;background:#fff;border:1px solid #000;box-sizing:border-box;"></div>
<div style="position:absolute;left:1335px;top:338.2px;width:21px;height:103.5px;background:#f0f0f0;"></div>
<div style="position:absolute;left:1167px;top:338.59999999999997px;width:167px;height:12.2px;background:#0078d7;"></div>
<div style="position:absolute;left:1342px;top:406px;width:7px;height:9px;background:#808080;"></div>
<span id="t88" style="position:absolute;white-space:pre;left:1171.0px;top:338.6px;font-family:'DejaVu Sans','Liberation Sans',sans-serif;font-size:10.5px;line-height:13px;color:#fff;transform:scaleX(0.9538);transform-origin:0 50%;">UTC+07</span>
<span id="t89" style="position:absolute;white-space:pre;left:1171.0px;top:351.6px;font-family:'DejaVu Sans','Liberation Sans',sans-serif;font-size:10.5px;line-height:13px;color:#000;transform:scaleX(0.9538);transform-origin:0 50%;">UTC+08</span>
<span id="t90" style="position:absolute;white-space:pre;left:1171.0px;top:364.6px;font-family:'DejaVu Sans','Liberation Sans',sans-serif;font-size:10.5px;line-height:13px;color:#000;transform:scaleX(0.9353);transform-origin:0 50%;">UTC+08:45</span>
<span id="t91" style="position:absolute;white-space:pre;left:1171.0px;top:377.6px;font-family:'DejaVu Sans','Liberation Sans',sans-serif;font-size:10.5px;line-height:13px;color:#000;transform:scaleX(0.9538);transform-origin:0 50%;">UTC+09</span>
<span id="t92" style="position:absolute;white-space:pre;left:1171.0px;top:390.6px;font-family:'DejaVu Sans','Liberation Sans',sans-serif;font-size:10.5px;line-height:13px;color:#000;transform:scaleX(0.9353);transform-origin:0 50%;">UTC+09:30</span>
<span id="t93" style="position:absolute;white-space:pre;left:1171.0px;top:403.6px;font-family:'DejaVu Sans','Liberation Sans',sans-serif;font-size:10.5px;line-height:13px;color:#000;transform:scaleX(0.9538);transform-origin:0 50%;">UTC+10</span>
<span id="t94" style="position:absolute;white-space:pre;left:1171.0px;top:416.6px;font-family:'DejaVu Sans','Liberation Sans',sans-serif;font-size:10.5px;line-height:13px;color:#000;transform:scaleX(0.9353);transform-origin:0 50%;">UTC+10:30</span>
<span id="t95" style="position:absolute;white-space:pre;left:1171.0px;top:429.6px;font-family:'DejaVu Sans','Liberation Sans',sans-serif;font-size:10.5px;line-height:13px;color:#000;transform:scaleX(0.9422);transform-origin:0 50%;">UTC+11</span>
<div style="position:absolute;left:1165px;top:490px;width:176px;height:47px;background:#fff;border:2px solid #1e6e42;box-sizing:border-box;"></div>
<span id="t96" style="position:absolute;white-space:pre;left:1189.1px;top:495.7px;font-family:'Liberation Sans',sans-serif;font-size:13px;line-height:16px;color:#000;font-weight:bold;transform:scaleX(0.9642);transform-origin:0 50%;">CST Australia Central</span>
<div style="position:absolute;left:1340.5px;top:495.5px;width:16.5px;height:16px;background:linear-gradient(#ececec,#dddddd);border:1px solid #adadad;box-sizing:border-box;"></div>
<svg style="left:1345px;top:502.0px" width="8" height="4"><path d="M0 0H7.6L3.8 4Z" fill="#5a5a5a"/></svg>
<div style="position:absolute;left:1166px;top:513px;width:191px;height:105.5px;background:#fff;border:1px solid #000;box-sizing:border-box;"></div>
<div style="position:absolute;left:1335px;top:514px;width:21px;height:103.5px;background:#f0f0f0;"></div>
<div style="position:absolute;left:1167px;top:514.9399999999999px;width:167px;height:12.2px;background:#0078d7;"></div>
<div style="position:absolute;left:1342px;top:560px;width:7px;height:9px;background:#808080;"></div>
<span id="t97" style="position:absolute;white-space:pre;left:1171.0px;top:515.3px;font-family:'DejaVu Sans','Liberation Sans',sans-serif;font-size:10.5px;line-height:13px;color:#fff;transform:scaleX(0.9489);transform-origin:0 50%;">CST Australia Central Summer</span>
<span id="t98" style="position:absolute;white-space:pre;left:1171.0px;top:528.3px;font-family:'DejaVu Sans','Liberation Sans',sans-serif;font-size:10.5px;line-height:13px;color:#000;transform:scaleX(0.9132);transform-origin:0 50%;">LHST</span>
<span id="t99" style="position:absolute;white-space:pre;left:1171.0px;top:541.3px;font-family:'DejaVu Sans','Liberation Sans',sans-serif;font-size:10.5px;line-height:13px;color:#000;transform:scaleX(0.9178);transform-origin:0 50%;">AEDT</span>
<span id="t100" style="position:absolute;white-space:pre;left:1171.0px;top:554.3px;font-family:'DejaVu Sans','Liberation Sans',sans-serif;font-size:10.5px;line-height:13px;color:#000;transform:scaleX(0.9621);transform-origin:0 50%;">BST Bougainville</span>
<span id="t101" style="position:absolute;white-space:pre;left:1171.0px;top:567.3px;font-family:'DejaVu Sans','Liberation Sans',sans-serif;font-size:10.5px;line-height:13px;color:#000;transform:scaleX(0.9401);transform-origin:0 50%;">KOST</span>
<span id="t102" style="position:absolute;white-space:pre;left:1171.0px;top:580.3px;font-family:'DejaVu Sans','Liberation Sans',sans-serif;font-size:10.5px;line-height:13px;color:#000;transform:scaleX(0.9614);transform-origin:0 50%;">LHST Lord Howe Summer</span>
<span id="t103" style="position:absolute;white-space:pre;left:1171.0px;top:593.3px;font-family:'DejaVu Sans','Liberation Sans',sans-serif;font-size:10.5px;line-height:13px;color:#000;transform:scaleX(0.9703);transform-origin:0 50%;">MIST</span>
<span id="t104" style="position:absolute;white-space:pre;left:1171.0px;top:606.3px;font-family:'DejaVu Sans','Liberation Sans',sans-serif;font-size:10.5px;line-height:13px;color:#000;transform:scaleX(0.9487);transform-origin:0 50%;">NCT</span>
<div style="position:absolute;left:651px;top:189px;width:110px;height:48px;border-radius:7px;background:linear-gradient(180deg,#f4f4f4 0%,#dadada 12%,#c9c9c9 50%,#bcbcbc 88%,#9c9c9c 100%);box-shadow:1px 2px 3px rgba(0,0,0,.45), inset 2px 0 2px rgba(255,255,255,.6), inset -2px 0 2px rgba(120,120,120,.35);"></div>
<svg style="left:662px;top:193px" width="40" height="40" viewBox="0 0 40 40"><defs><linearGradient id="ag" x1="0" y1="0" x2="1" y2="1"><stop offset="0" stop-color="#8a8e94"/><stop offset=".5" stop-color="#3c3c3c"/><stop offset="1" stop-color="#6a6a6a"/></linearGradient></defs><path d="M2 13L17 2V9H26C33 9 37.5 14 37.5 23C37.5 32 33 37 26 37H10V29H25C28 29 29.5 27 29.5 23C29.5 19 28 17.5 25 17.5H17V25Z" fill="url(#ag)"/></svg>
<span id="t105" style="position:absolute;white-space:pre;left:708.0px;top:199.9px;font-family:'Liberation Sans',sans-serif;font-size:11px;line-height:13px;color:#000;font-weight:bold;font-style:italic;transform:scaleX(1.0314);transform-origin:0 50%;">Back to</span>
<span id="t106" style="position:absolute;white-space:pre;left:712.5px;top:215.8px;font-family:'Liberation Sans',sans-serif;font-size:11px;line-height:13px;color:#000;font-weight:bold;font-style:italic;transform:scaleX(1.1136);transform-origin:0 50%;">Menu</span>
<div style="position:absolute;left:1126px;top:189px;width:140px;height:47.5px;background:#fff;border:1px solid #000;box-sizing:border-box;box-shadow:2px 3px 4px rgba(0,0,0,.55);"></div>
<span id="t107" style="position:absolute;white-space:pre;left:1130.5px;top:186.2px;font-family:'Liberation Sans',sans-serif;font-size:33px;line-height:40px;color:#111;-webkit-text-stroke:0.9px #111;letter-spacing:2.99px;">s<span style="position:relative;display:inline-block">o<svg style="left:-0.3px;top:13.4px" width="19" height="19" viewBox="0 0 19 19"><circle cx="9.5" cy="9.5" r="9.1" fill="#111"/><rect x="5" y="4.6" width="9.4" height="9.8" rx="2.2" fill="#fff"/><path d="M7 12.8V10.6M9.6 12.8V8.6M12.2 12.8V6.4" stroke="#111" stroke-width="1.5"/></svg></span>meka</span>
<span id="t108" style="position:absolute;white-space:pre;left:1171.2px;top:222.5px;font-family:'Liberation Sans',sans-serif;font-size:10.4px;line-height:12px;color:#5a5a5a;font-weight:bold;letter-spacing:0.87px;">Excel Solutions</span>
<svg style="left:22px;top:188px" width="48" height="50" viewBox="22 188 48 50">
<circle cx="39.2" cy="207" r="14.2" fill="#56cdf2"/><circle cx="39.2" cy="207" r="11.6" fill="#1b9fd9"/>
<path d="M39.2 197L44.5 207.5L39.2 211L34 207.5Z" fill="#8fdcf6"/><path d="M39.2 197V211L34 207.5Z" fill="#3eb9e8"/>
<circle cx="51.8" cy="219" r="14.8" fill="#ffe23b"/><circle cx="51.8" cy="219" r="12.2" fill="#fdb827"/>
<path d="M46.5 214.2L51.8 211L57.1 214.2M46.5 223.8L51.8 227L57.1 223.8" fill="none" stroke="#ffdf4a" stroke-width="1.5"/>
<path d="M57.5 194.6C62 194.2 64.6 197 64.3 201" stroke="#62d2f3" stroke-width="3" fill="none"/><path d="M60.6 200L64.4 205L67.6 199.6Z" fill="#62d2f3"/><path d="M59 191.4L54.6 194.6L59 198Z" fill="#62d2f3"/>
<path d="M34 231.4C29.500 231.8 26.9 229 27.2 225" stroke="#62d2f3" stroke-width="3" fill="none"/><path d="M30.9 226L27.100 221L23.9 226.4Z" fill="#62d2f3"/><path d="M32.5 234.600L36.9 231.4L32.5 228Z" fill="#62d2f3"/>
</svg>
<span id="t109" style="position:absolute;white-space:pre;left:43.7px;top:213.7px;font-family:'Liberation Sans',sans-serif;font-size:9px;line-height:11px;color:#ffec55;font-weight:bold;transform:scaleX(0.9371);transform-origin:0 50%;">NFT</span>
</div>
</body></html>
